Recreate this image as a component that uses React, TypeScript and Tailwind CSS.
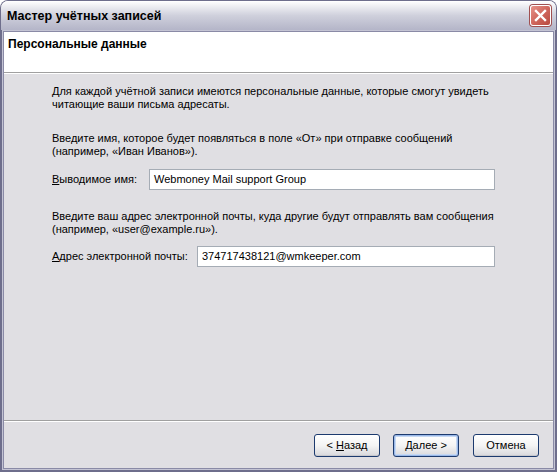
import React from "react";

const font = { fontFamily: '"Liberation Sans", Arial, sans-serif' };

function Btn({ children, def }: { children: React.ReactNode; def?: boolean }) {
  return (
    <div
      className={`w-[66px] h-[23px] rounded-[3px] border border-[#1c3a6e] flex items-center justify-center text-[11px] text-black bg-gradient-to-b from-[#ffffff] via-[#f4f4f4] to-[#d8d8dc] ${
        def ? "shadow-[inset_0_0_0_1px_#9ab8e8,inset_0_0_0_2px_#c6d8f2]" : "shadow-[inset_0_-1px_0_#c8c8cc]"
      }`}
    >
      {children}
    </div>
  );
}

export default function App() {
  return (
    <div className="w-[557px] h-[472px] bg-white" style={font}>
      <div className="w-[557px] h-[472px] flex flex-col rounded-t-[8px] bg-[#6e6e8c] p-0 overflow-hidden">
        {/* Title bar */}
        <div className="h-[29px] shrink-0 mx-[1px] mt-[1px] rounded-t-[7px] bg-gradient-to-b from-[#ffffff] via-[#cfd0dc] to-[#b4b5c8] flex items-center pl-[6px] pr-[5px] shadow-[inset_0_1px_0_#ffffff]">
          <div className="text-[12.5px] font-bold text-black mt-[1px]">Мастер учётных записей</div>
          <div className="ml-auto w-[21px] h-[21px] rounded-[3px] border border-[#ffffff] bg-gradient-to-br from-[#e6938a] via-[#d0675d] to-[#b84a40] flex items-center justify-center shadow-[0_0_0_1px_#a05050]">
            <svg width="13" height="13" viewBox="0 0 13 13">
              <path d="M2 2 L11 11 M11 2 L2 11" stroke="#ffffff" strokeWidth="2.4" strokeLinecap="square" />
            </svg>
          </div>
        </div>
        {/* Body frame */}
        <div className="flex-1 flex flex-col mx-[2px] mb-[2px] border border-[#c4c4d4]">
          <div className="flex-1 flex flex-col border border-[#8a8aa6] bg-[#e0dfe3]">
            {/* Header */}
            <div className="h-[41px] shrink-0 bg-white border-b border-[#a0a0a0] pl-[4px] pt-[3px]">
              <div className="text-[12px] font-bold text-black">Персональные данные</div>
            </div>
            <div className="h-[1px] bg-white" />
            {/* Content */}
            <div className="flex-1 pl-[48px] pr-[58px] pt-[11px] text-[11px] leading-[13px] text-black">
              <p>
                Для каждой учётной записи имеются персональные данные, которые смогут увидеть
                <br />
                читающие ваши письма адресаты.
              </p>
              <p className="mt-[21px]">
                Введите имя, которое будет появляться в поле «От» при отправке сообщений
                <br />
                (например, «Иван Иванов»).
              </p>
              <div className="mt-[11px] flex items-center">
                <div className="w-[97px]">
                  <u>В</u>ыводимое имя:
                </div>
                <div className="flex-1 h-[21px] bg-white border border-[#a5acb5] flex items-center pl-[4px]">
                  Webmoney Mail support Group
                </div>
              </div>
              <p className="mt-[20px]">
                Введите ваш адрес электронной почты, куда другие будут отправлять вам сообщения
                <br />
                (например, «user@example.ru»).
              </p>
              <div className="mt-[10px] flex items-center">
                <div className="w-[145px]">
                  <u>А</u>дрес электронной почты:
                </div>
                <div className="flex-1 h-[21px] bg-white border border-[#a5acb5] flex items-center pl-[4px]">
                  374717438121@wmkeeper.com
                </div>
              </div>
            </div>
            {/* Separator */}
            <div className="h-[1px] bg-[#a0a0a0]" />
            <div className="h-[1px] bg-white" />
            {/* Buttons */}
            <div className="h-[46px] shrink-0 flex items-center justify-end pr-[14px]">
              <Btn>
                {"<\u00a0"}
                <u>Н</u>азад
              </Btn>
              <div className="w-[13px]" />
              <Btn def>
                <u>Д</u>алее{"\u00a0>"}
              </Btn>
              <div className="w-[14px]" />
              <Btn>Отмена</Btn>
            </div>
          </div>
        </div>
      </div>
    </div>
  );
}
